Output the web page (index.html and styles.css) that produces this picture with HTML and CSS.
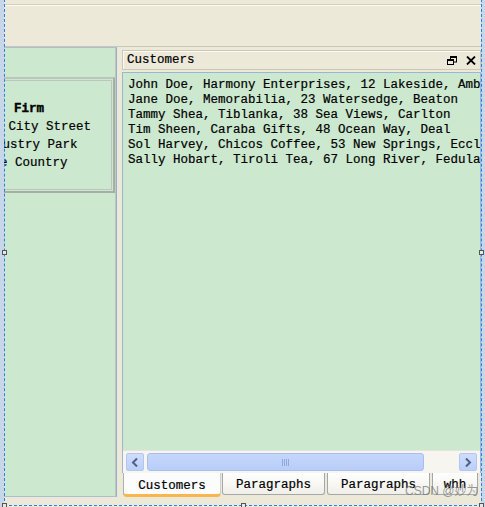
FILE: index.html
```html
<!DOCTYPE html>
<html>
<head>
<meta charset="utf-8">
<link rel="stylesheet" href="styles.css">
</head>
<body>
<div class="page">
  <div class="edge"></div>
  <div class="main">
    <div class="top">
      <div class="top-a"></div>
      <div class="toolbar"></div>
    </div>
    <div class="content">
      <div class="left">
        <div class="group">
          <div class="gl l1">Firm</div>
          <div class="gl l2">12 City Street</div>
          <div class="gl l3">Industry Park</div>
          <div class="gl l4">The Country</div>
        </div>
      </div>
      <div class="splitter"></div>
      <div class="right">
        <div class="caption">
          <span class="cap-text">Customers</span>
          <span class="cap-icons">
            <svg class="ico-restore" width="10" height="9" viewBox="0 0 10 9">
              <rect x="3" y="0" width="7" height="2" fill="#000"/>
              <rect x="3.5" y="0.5" width="6" height="5.5" fill="none" stroke="#000"/>
              <rect x="0" y="3" width="7" height="6" fill="#ece9d8"/>
              <rect x="0" y="3" width="7" height="2" fill="#000"/>
              <rect x="0.5" y="3.5" width="6" height="5" fill="none" stroke="#000"/>
            </svg>
            <svg class="ico-close" width="10" height="9" viewBox="0 0 10 9">
              <path d="M1 0.5 L9 8.5 M9 0.5 L1 8.5" stroke="#000" stroke-width="1.8" fill="none"/>
            </svg>
          </span>
        </div>
        <div class="textarea">
          <div class="text">
            <div class="tl">John Doe, Harmony Enterprises, 12 Lakeside, Ambleton</div>
            <div class="tl">Jane Doe, Memorabilia, 23 Watersedge, Beaton</div>
            <div class="tl">Tammy Shea, Tiblanka, 38 Sea Views, Carlton</div>
            <div class="tl">Tim Sheen, Caraba Gifts, 48 Ocean Way, Deal</div>
            <div class="tl">Sol Harvey, Chicos Coffee, 53 New Springs, Eccleston</div>
            <div class="tl">Sally Hobart, Tiroli Tea, 67 Long River, Fedula</div>
          </div>
          <div class="hscroll">
            <div class="sbtn">
              <svg width="8" height="9" viewBox="0 0 8 9"><path d="M6 0.5 L2 4.5 L6 8.5" stroke="#4d6185" stroke-width="2" fill="none"/></svg>
            </div>
            <div class="thumb">
              <svg width="8" height="7" viewBox="0 0 8 7"><path d="M0.5 0 V7 M2.5 0 V7 M4.5 0 V7 M6.5 0 V7" stroke="#8ea8e0" stroke-width="1" fill="none"/></svg>
            </div>
            <div class="strack"></div>
            <div class="sbtn">
              <svg width="8" height="9" viewBox="0 0 8 9"><path d="M2 0.5 L6 4.5 L2 8.5" stroke="#4d6185" stroke-width="2" fill="none"/></svg>
            </div>
          </div>
        </div>
        <div class="tabs">
          <div class="tab active">Customers</div>
          <div class="tab t2">Paragraphs</div>
          <div class="tab t3">Paragraphs</div>
          <div class="tab t4">whh</div>
        </div>
      </div>
    </div>
    <div class="bottom"></div>
  </div>
  <div class="edge"></div>

  <div class="selection">
    <span class="handle h-lm"></span>
    <span class="handle h-rm"></span>
    <span class="handle h-bl"></span>
    <span class="handle h-bm"></span>
    <span class="handle h-br"></span>
  </div>
  <div class="watermark">CSDN @妙为</div>
</div>
</body>
</html>
```
FILE: styles.css
```css
* { box-sizing: border-box; }
html, body { margin: 0; padding: 0; }
body {
  width: 485px;
  height: 507px;
  overflow: hidden;
  background: #ece9d8;
  font-family: "Liberation Mono", "DejaVu Sans Mono", monospace;
  font-size: 12.5px;
  color: #000;
  -webkit-text-stroke: 0.2px #000;
}
.page {
  position: relative;
  display: flex;
  width: 485px;
  height: 507px;
}
.edge {
  width: 4px;
  background: #c8d6ea;
  flex: none;
}
.main {
  width: 477px;
  flex: none;
  display: flex;
  flex-direction: column;
  background: #ece9d8;
}
.top { height: 47px; flex: none; }
.top-a { height: 5px; border-bottom: 1px solid #d3cfbf; }
.toolbar {
  height: 42px;
  border-top: 1px solid #faf9f4;
  border-bottom: 1px solid #cbc7b7;
}
.content {
  height: 450px;
  flex: none;
  display: flex;
}
.left {
  width: 113px;
  flex: none;
  background: #cce8cf;
  border-top: 1px solid #aabfd3;
  border-bottom: 1px solid #aabfd3;
  border-right: 1px solid #97aec8;
  box-shadow: inset -1px 0 0 #bcc8c0;
  overflow: hidden;
}
.group {
  margin: 29px 1px 0 -6px;
  height: 116px;
  border: 2px solid #a7ada7;
  border-top-color: #bcc4bc;
  border-left-color: #bcc4bc;
  box-shadow: inset 0 0 0 1px #cce8cf, inset 0 0 0 2px #bcc6bc;
  padding-top: 21px;
  overflow: hidden;
}
.gl {
  height: 18px;
  line-height: 18px;
  white-space: pre;
}
.l1 { margin-left: 14px; font-weight: bold; -webkit-text-stroke: 0.4px #000; }
.l2 { margin-left: -14px; }
.l3 { margin-left: -20px; }
.l4 { margin-left: -15px; }
.splitter { width: 5px; flex: none; }
.right {
  flex: 1;
  min-width: 0;
  display: flex;
  flex-direction: column;
  padding-top: 3px;
}
.caption {
  height: 20px;
  flex: none;
  display: flex;
  align-items: center;
  justify-content: space-between;
  border: 1px solid #cbc7b7;
  box-shadow: inset 1px 1px 0 #fbfaf6;
  padding: 0 4px 0 4px;
  margin-bottom: 2px;
}
.cap-text { line-height: 18px; }
.cap-icons {
  display: flex;
  align-items: center;
  gap: 9px;
}
.cap-icons svg { display: block; }
.textarea {
  height: 401px;
  flex: none;
  display: flex;
  flex-direction: column;
  border: 1px solid #9db6d0;
  border-bottom: none;
  background: #cce8cf;
  overflow: hidden;
}
.text {
  flex: 1;
  padding: 5px 0 0 5px;
  overflow: hidden;
}
.tl {
  height: 15px;
  line-height: 15px;
  white-space: pre;
}
.hscroll {
  height: 23px;
  flex: none;
  display: flex;
  align-items: center;
  padding: 0 3px 0 3px;
  background: #f6f5f0;
  border-top: 1px solid #e6e4da;
}
.sbtn {
  width: 18px;
  height: 18px;
  flex: none;
  display: flex;
  align-items: center;
  justify-content: center;
  background: linear-gradient(#cfdcfc, #bccffa);
  border: 1px solid #b3c6f2;
  border-radius: 2px;
}
.sbtn svg { display: block; }
.thumb {
  width: 277px;
  height: 18px;
  flex: none;
  margin-left: 3px;
  display: flex;
  align-items: center;
  justify-content: center;
  background: linear-gradient(#c6d6fb, #b8cdf8);
  border: 1px solid #a7bff0;
  border-radius: 3px;
}
.thumb svg { display: block; }
.strack { flex: 1; }
.tabs {
  height: 24px;
  flex: none;
  display: flex;
  align-items: flex-start;
  padding-left: 1px;
}
.tab {
  height: 22px;
  padding-top: 3px;
  line-height: 18px;
  text-align: center;
  white-space: pre;
  border: 1px solid #a2a9aa;
  border-top: none;
  border-radius: 0 0 3px 3px;
  background: linear-gradient(#ffffff, #f0efe9);
}
.tab.active {
  width: 98px;
  height: 24px;
  padding-top: 4px;
  background: #fcfcfd;
  border-left: 1px solid #a8b1b3;
  border-right: 1px solid #d0d0d0;
  border-bottom: 3px solid #f7b74a;
  border-radius: 0 0 4px 4px;
}
.tab.t2 { width: 103px; margin-left: 1px; }
.tab.t3 { width: 103px; margin-left: 2px; }
.tab.t4 { width: 46px; margin-left: 2px; }
.bottom { flex: 1; }

.selection {
  position: absolute;
  left: 4px;
  top: -1px;
  width: 478px;
  height: 507px;
  border: 1px dashed #2b7ee3;
  pointer-events: none;
}
.handle {
  position: absolute;
  width: 5px;
  height: 5px;
  border: 1px solid #555;
  background: #e8e8e0;
}
.h-lm { left: -3px; top: 250px; }
.h-rm { right: -3px; top: 250px; }
.h-bl { left: -3px; bottom: -3px; }
.h-bm { left: 236px; bottom: -3px; }
.h-br { right: -3px; bottom: -3px; }
.watermark {
  position: absolute;
  left: 405px;
  top: 484px;
  font-family: "Liberation Sans", "Noto Sans CJK SC", sans-serif;
  font-size: 12px;
  line-height: 14px;
  color: rgba(120, 120, 120, 0.75);
  white-space: nowrap;
  -webkit-text-stroke: 0;
}
```
